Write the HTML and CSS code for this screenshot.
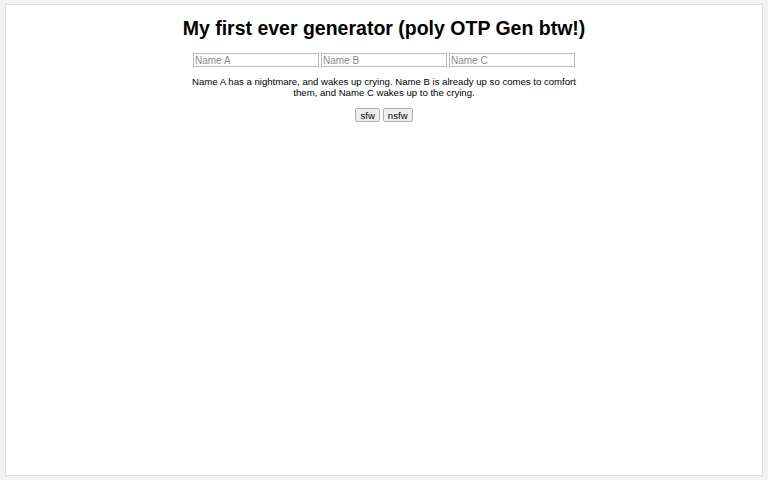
FILE: index.html
```html
<!DOCTYPE html>
<html lang="en">
<head>
    <meta charset="UTF-8">
    <title>poly OTP Gen</title>
    <link rel="stylesheet" href="styles.css">
</head>
<body>
    <div class="page">
        <h1>My first ever generator (poly OTP Gen btw!)</h1>
        <div class="names">
            <input type="text" id="nameA" placeholder="Name A">
            <input type="text" id="nameB" placeholder="Name B">
            <input type="text" id="nameC" placeholder="Name C">
        </div>
        <p id="prompt">Name A has a nightmare, and wakes up crying. Name B is already up so comes to comfort them, and Name C wakes up to the crying.</p>
        <div class="buttons">
            <button id="sfwBtn">sfw</button>
            <button id="nsfwBtn">nsfw</button>
        </div>
    </div>
</body>
</html>
```

FILE: styles.css
```css
body {
    font-family: 'Liberation Sans', Arial, sans-serif;
    margin: 0;
    padding: 4px 5px 4px 5px;
    background-color: #f2f2f2;
    height: 480px;
    box-sizing: border-box;
}

.page {
    height: 100%;
    box-sizing: border-box;
    background: #fff;
    border: 1px solid #dcdcdc;
    text-align: center;
    padding-top: 12px;
}

h1 {
    font-size: 19.5px;
    line-height: 22px;
    margin: 0 0 14px 0;
}

.names {
    width: 384px;
    margin: 0 auto;
    display: flex;
    justify-content: center;
    gap: 2px;
}

input[type="text"] {
    width: 126px;
    height: 14px;
    box-sizing: border-box;
    font-family: inherit;
    font-size: 10px;
    padding: 0 1px;
    border: 1px solid #b8b8b8;
    color: #333;
}

input::placeholder {
    color: #8a8a8a;
}

#prompt {
    width: 390px;
    margin: 9px auto 10px auto;
    font-size: 9.6px;
    line-height: 11px;
}

.buttons {
    display: flex;
    justify-content: center;
    gap: 3px;
}

button {
    font-family: inherit;
    font-size: 9.6px;
    height: 14px;
    padding: 0 4px;
    border: 1px solid #b0b0b0;
    border-radius: 2px;
    background: #efefef;
    color: #000;
}
```
